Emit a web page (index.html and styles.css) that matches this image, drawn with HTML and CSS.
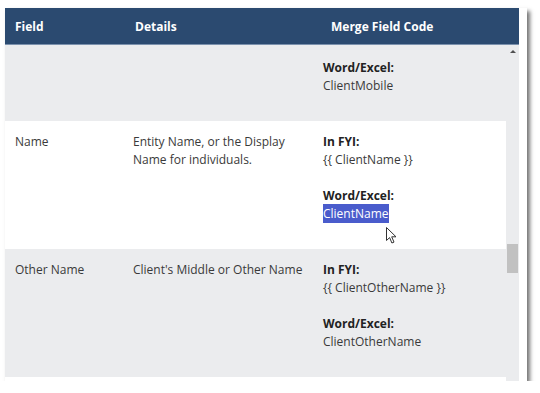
FILE: index.html
```html
<!DOCTYPE html>
<html lang="en">
<head>
  <meta charset="UTF-8" />
  <title>Merge Fields</title>
  <link rel="stylesheet" href="styles.css">
</head>
<body>
  <div class="frame">
    <div class="grid-head">
      <div class="col-field">Field</div>
      <div class="col-details">Details</div>
      <div class="col-code">Merge Field Code</div>
    </div>
    <div class="grid-body">
      <div class="rows">
        <div class="row alt partial">
          <div class="col-field"></div>
          <div class="col-details"></div>
          <div class="col-code">
            <p><b>Word/Excel:</b><br>ClientMobile</p>
          </div>
        </div>
        <div class="row">
          <div class="col-field">Name</div>
          <div class="col-details">Entity Name, or the Display Name for individuals.</div>
          <div class="col-code">
            <p><b>In FYI:</b><br>{{ ClientName }}</p>
            <p><b>Word/Excel:</b><br><span class="selected">ClientName</span></p>
            <svg class="cursor" width="12" height="18" viewBox="0 0 12 18">
              <path d="M0.5 0.5 L0.5 13.5 L3.6 10.6 L5.9 16 L8 15.1 L5.7 9.8 L10 9.8 Z" fill="#fff" stroke="#333" stroke-width="1" stroke-linejoin="round"/>
            </svg>
          </div>
        </div>
        <div class="row alt">
          <div class="col-field">Other Name</div>
          <div class="col-details">Client's Middle or Other Name</div>
          <div class="col-code">
            <p><b>In FYI:</b><br>{{ ClientOtherName }}</p>
            <p><b>Word/Excel:</b><br>ClientOtherName</p>
          </div>
        </div>
        <div class="row tail"></div>
      </div>
      <div class="scrollbar">
        <div class="arrow-up"></div>
        <div class="thumb"></div>
      </div>
    </div>
  </div>
</body>
</html>
```

FILE: styles.css
```css
body {
  margin: 0;
  background: #fff;
  font-family: 'Open Sans', Arial, sans-serif;
  font-size: 12px;
  line-height: 18px;
  color: #3a3a3a;
}
.frame {
  margin: 8px 0 0 5px;
  width: 522px;
  height: 373px;
  background: #fff;
  box-shadow: 3px 3px 4px rgba(0,0,0,0.55);
  overflow: hidden;
}
.grid-head {
  display: grid;
  grid-template-columns: 118px 190px 1fr;
  width: 514px;
  height: 37px;
  box-sizing: border-box;
  padding-top: 1px;
  align-items: center;
  background: #2b4a70;
  border-bottom: 1px solid #7b91ad;
  color: #fff;
  font-weight: 700;
}
.grid-head .col-field { padding-left: 10px; }
.grid-head .col-details { padding-left: 12px; }
.grid-head .col-code { padding-left: 18px; }
.grid-body {
  display: flex;
  width: 514px;
  height: 336px;
  overflow: hidden;
}
.rows {
  width: 501px;
}
.row {
  display: grid;
  grid-template-columns: 118px 190px 1fr;
  background: #fff;
  padding: 12px 0 8px;
}
.row.alt {
  background: #ebecee;
}
.row.partial {
  padding-top: 14px;
}
.row.tail {
  height: 20px;
}
.row > div {
  padding-left: 10px;
  padding-right: 8px;
}
.col-code {
  position: relative;
}
.col-code p {
  margin: 0 0 18px;
}
.col-code b {
  color: #222;
}
.selected {
  background: #4a5ccc;
  color: #fff;
  padding: 1px 0;
}
.cursor {
  position: absolute;
  left: 73px;
  top: 94px;
}
.scrollbar {
  width: 13px;
  background: #ebecee;
  position: relative;
}
.arrow-up {
  position: absolute;
  left: 4px;
  top: 5px;
  width: 0;
  height: 0;
  border-left: 3px solid transparent;
  border-right: 3px solid transparent;
  border-bottom: 3px solid #505050;
}
.thumb {
  position: absolute;
  left: 1px;
  top: 199px;
  width: 11px;
  height: 29px;
  background: #c1c1c1;
}
```
